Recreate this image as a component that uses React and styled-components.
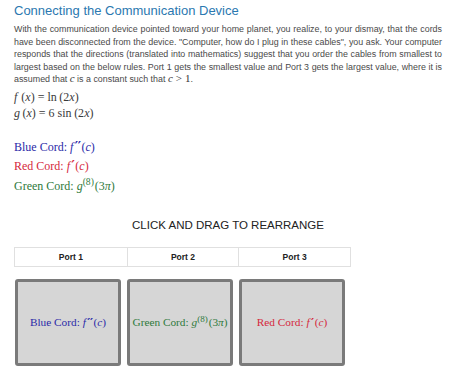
import React from "react";
import styled, { createGlobalStyle } from "styled-components";

const GlobalStyle = createGlobalStyle`
  body {
    margin: 0;
    background: #fff;
    font-family: "Liberation Sans", Arial, sans-serif;
  }
`;

const Page = styled.div`
  width: 428px;
  padding: 2px 0 0 14px;
`;

const Title = styled.h1`
  margin: 0;
  font-size: 13px;
  font-weight: normal;
  line-height: 18px;
  color: #2b78b0;
`;

const Intro = styled.p`
  margin: 3px 0 0;
  font-size: 8.9px;
  line-height: 12.6px;
  color: #4a4a4a;
  text-align: justify;
`;

const InlineMath = styled.span`
  font-family: "Liberation Serif", "DejaVu Serif", serif;
  font-size: 11px;
  line-height: 1;
  color: #333;
`;

const MathLine = styled.div`
  font-family: "Liberation Serif", "DejaVu Serif", serif;
  font-size: 12px;
  line-height: 16px;
  color: ${(p) => p.color || "#3a3a3a"};
  margin-top: ${(p) => p.gap || 0}px;
`;

const V = styled.i`
  font-style: italic;
  padding-right: ${(p) => (p.tail ? 1.5 : 0)}px;
`;

const Up = styled.sup`
  font-size: 0.8em;
  line-height: 0;
  vertical-align: 0.55em;
  margin-right: 1px;
`;

const Prime = styled.span`
  font-family: "DejaVu Serif", serif;
  font-size: 1.05em;
  font-weight: bold;
  line-height: 0;
  vertical-align: 0.02em;
  margin-right: 1px;
  letter-spacing: -0.5px;
`;

const Op = styled.span`
  padding: 0 3px;
`;

const Fn = styled.span`
  padding-right: 2.5px;
`;

const Instructions = styled.div`
  margin-top: 24px;
  text-align: center;
  font-size: 11.5px;
  line-height: 14px;
  color: #222;
`;

const PortTable = styled.div`
  margin-top: 15px;
  width: 335px;
  display: grid;
  grid-template-columns: repeat(3, 1fr);
  border: 1px solid #e0e0e0;
`;

const PortHead = styled.div`
  height: 18px;
  line-height: 18px;
  text-align: center;
  font-size: 8.5px;
  font-weight: bold;
  color: #222;
  & + & {
    border-left: 1px solid #e0e0e0;
  }
`;

const Slots = styled.div`
  margin-top: 12px;
  display: flex;
  gap: 6px;
  padding-left: 1px;
`;

const Cable = styled.div`
  width: 100px;
  height: 81px;
  border: 3px solid #7a7a7a;
  border-radius: 3px;
  background: #d6d6d6;
  display: flex;
  align-items: center;
  justify-content: center;
  font-family: "Liberation Serif", "DejaVu Serif", serif;
  font-size: 11.3px;
  color: ${(p) => p.color};
  white-space: nowrap;
`;

const BLUE = "#2a2aa8";
const RED = "#d5283c";
const GREEN = "#2f7a3c";

const BlueLabel = () => (
  <span>
    Blue Cord: <V tail>f</V><Prime>′′</Prime>(<V>c</V>)
  </span>
);
const RedLabel = () => (
  <span>
    Red Cord: <V tail>f</V><Prime>′</Prime>(<V>c</V>)
  </span>
);
const GreenLabel = () => (
  <span>
    Green Cord: <V>g</V><Up>(8)</Up>(3<V>π</V>)
  </span>
);

export default function App() {
  return (
    <Page>
      <GlobalStyle />
      <Title>Connecting the Communication Device</Title>
      <Intro>
        With the communication device pointed toward your home planet, you realize, to your dismay, that the cords
        have been disconnected from the device. "Computer, how do I plug in these cables", you ask. Your computer
        responds that the directions (translated into mathematics) suggest that you order the cables from smallest to
        largest based on the below rules. Port 1 gets the smallest value and Port 3 gets the largest value, where it is
        assumed that <InlineMath><V>c</V></InlineMath> is a constant such that{" "}
        <InlineMath>
          <V>c</V>
          <Op>&gt;</Op>1
        </InlineMath>
        .
      </Intro>
      <MathLine gap={3}>
        <V tail>f</V><Fn />(<V>x</V>)<Op>=</Op>ln<Fn />(2<V>x</V>)
      </MathLine>
      <MathLine>
        <V>g</V><Fn />(<V>x</V>)<Op>=</Op>6 sin<Fn />(2<V>x</V>)
      </MathLine>
      <MathLine color={BLUE} gap={18}>
        <BlueLabel />
      </MathLine>
      <MathLine color={RED} gap={3}>
        <RedLabel />
      </MathLine>
      <MathLine color={GREEN} gap={4}>
        <GreenLabel />
      </MathLine>
      <Instructions>CLICK AND DRAG TO REARRANGE</Instructions>
      <PortTable>
        <PortHead>Port 1</PortHead>
        <PortHead>Port 2</PortHead>
        <PortHead>Port 3</PortHead>
      </PortTable>
      <Slots>
        <Cable color={BLUE}>
          <BlueLabel />
        </Cable>
        <Cable color={GREEN}>
          <GreenLabel />
        </Cable>
        <Cable color={RED}>
          <RedLabel />
        </Cable>
      </Slots>
    </Page>
  );
}
